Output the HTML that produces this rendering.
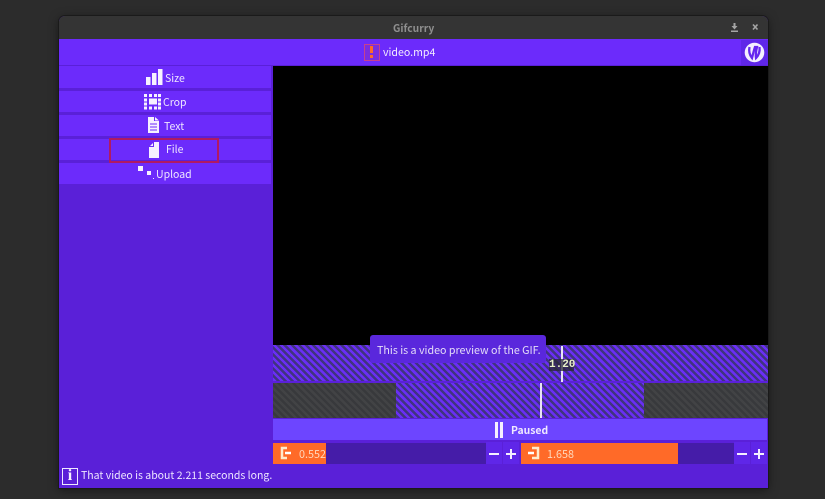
<!DOCTYPE html>
<html><head><meta charset="utf-8"><style>
html,body{margin:0;padding:0;width:825px;height:499px;overflow:hidden;background:#2c2c2c;font-family:"Noto Sans CJK JP","Liberation Sans",sans-serif}
.a{position:absolute}
svg{overflow:visible}
.btn{position:absolute;left:59px;width:212px;background:#6c2bfb}
.t{position:absolute;white-space:nowrap;line-height:14px}
.hatch{background:repeating-linear-gradient(45deg,#6a2ef6 0 2.5px,#40347f 2.5px 5px)}
.gray{background:repeating-linear-gradient(45deg,#424345 0 2.5px,#38393c 2.5px 5px)}
.sb{position:absolute;background:#5f26e8}
</style></head><body>
<div class="a" style="left:59px;top:16px;width:709px;height:472px;background:#5a20d8;border-radius:6px 6px 0 0;box-shadow:0 0 0 1px #1a1a1a,0 2px 10px rgba(0,0,0,.5);overflow:hidden"></div>
<div class="a" style="left:59px;top:16px;width:709px;height:23px;background:#343434;border-radius:6px 6px 0 0"></div>
<div class="t" style="left:393px;top:21px;font-size:10.300px;font-weight:700;color:#8f8f8f">Gifcurry</div>
<svg class="a" style="left:730px;top:22px" width="30" height="12"><path d="M3.500 1h2v3h2L4.500 7.500 1.500 4h2zM1 8.500h7v1.500H1z" fill="#a5a5a5"/><path d="M23 2.500l4.500 5M27.500 2.500l-4.500 5" stroke="#a5a5a5" stroke-width="1.600"/></svg>

<div class="a" style="left:59px;top:39px;width:709px;height:26px;background:#6c2bfb"></div>
<div class="a" style="left:364px;top:44px;width:14px;height:15px;border:1px solid #c8408c;background:#7a2de0"></div>
<div class="a" style="left:370px;top:46px;width:3px;height:7px;background:#ff6a28"></div>
<div class="a" style="left:370px;top:55px;width:3px;height:3px;background:#ff6a28"></div>
<div class="t" style="left:383px;top:46px;font-size:10.600px;color:#f3ecff">video.mp4</div>
<div class="a" style="left:741px;top:40px;width:27px;height:25px;background:#5f26e8"></div>
<svg class="a" style="left:744px;top:42px" width="21" height="21" viewBox="0 0 21 21"><circle cx="10.500" cy="10.500" r="9.800" fill="#f4efff"/><path d="M5.500 5c-1 5 0 8 2.500 11 1-4 2-8 3-11 1 0 1.500 0 2 0 -1 4-1.500 8-1 11 3-3 4-7 3.500-11" stroke="#6526ef" stroke-width="2.300" fill="none"/></svg>

<div class="btn" style="top:66px;height:22px"></div>
<div class="btn" style="top:91px;height:21px"></div>
<div class="btn" style="top:115px;height:21px"></div>
<div class="btn" style="top:139px;height:21px"></div>
<div class="btn" style="top:163px;height:21px"></div>

<svg class="a" style="left:140px;top:66px" width="40" height="120" fill="#f6f1ff">
<path d="M6 11h4.500v8H6zM12 7h4.500v12H12zM18 3h4.500v16H18z"/>
<path d="M4 28h3v3H4zM9 28h3v3H9zM14 28h3v3h-3zM18 28h3v3h-3zM4 32.500h3v3H4zM9 32.500h8v6H9zM18 32.500h3v3h-3zM4 36.500h3v3H4zM18 36.500h3v3h-3zM4 40.500h3v3H4zM9 40.500h3v3H9zM14 40.500h3v3h-3zM18 40.500h3v3h-3z"/>
<path d="M8 51h6v4h5v12H8zM15 51l4 3.500h-4z"/>
<path d="M10 57.500h7v1h-7zM10 60.500h7v1h-7zM10 63.500h7v1h-7z" fill="#6c2bfb"/>
<path d="M14 76h5v16H9V81h5zM10 80l3-3v3z"/>
<path d="M-2 100h5v5h-5zM7 105h4v4H7zM13 112h1v1h-1z"/>
</svg>
<div class="t" style="left:165px;top:72px;font-size:10.500px;color:#eee6ff">Size</div>
<div class="t" style="left:163px;top:96px;font-size:10.500px;color:#eee6ff">Crop</div>
<div class="t" style="left:164px;top:120px;font-size:10.500px;color:#eee6ff">Text</div>
<div class="t" style="left:166px;top:143px;font-size:10.500px;color:#eee6ff">File</div>
<div class="t" style="left:156px;top:168px;font-size:10.500px;color:#eee6ff">Upload</div>
<div class="a" style="left:109px;top:138px;width:106px;height:21px;border:2px solid #b01a63"></div>

<div class="a" style="left:273px;top:66px;width:495px;height:279px;background:#000"></div>
<div class="a hatch" style="left:273px;top:345px;width:495px;height:36px"></div>
<div class="a hatch" style="left:273px;top:383px;width:495px;height:35px"></div>
<div class="a gray" style="left:273px;top:383px;width:123px;height:35px"></div>
<div class="a gray" style="left:644px;top:383px;width:124px;height:35px"></div>
<div class="a" style="left:540px;top:383px;width:2px;height:35px;background:#e8e2f5"></div>
<div class="a" style="left:561px;top:346px;width:2px;height:36px;background:#e8e2f5"></div>
<div class="a" style="left:549px;top:359px;width:25px;height:12px;background:rgba(40,40,50,.75)"></div>
<div class="t" style="left:549px;top:358px;font-family:'Liberation Mono',monospace;font-size:11px;font-weight:bold;color:#e8f0c8">1.20</div>
<div class="a" style="left:370px;top:335px;width:176px;height:28px;background:#5a27dc;border-radius:3px"></div>
<div class="t" style="left:377px;top:344px;font-size:10.700px;color:#e4dcf8">This is a video preview of the GIF.</div>

<div class="a" style="left:273px;top:419px;width:494px;height:21px;background:#6d45ff"></div>
<div class="a" style="left:495px;top:422px;width:3px;height:16px;background:#f6f1ff"></div>
<div class="a" style="left:500px;top:422px;width:3px;height:16px;background:#f6f1ff"></div>
<div class="t" style="left:511px;top:423px;font-size:10.400px;font-weight:bold;color:#efe9ff">Paused</div>

<div class="a" style="left:273px;top:443px;width:213px;height:21px;background:#451ca8"></div>
<div class="a" style="left:273px;top:443px;width:53px;height:21px;background:#ff6a28"></div>
<svg class="a" style="left:279px;top:446px" width="16" height="14" fill="none" stroke="#ffeacc" stroke-width="2.500"><path d="M8 2H3v10h5"/><path d="M6 7h6" stroke="#fff"/></svg>
<div class="t" style="left:299px;top:447px;font-size:10.800px;color:#ffd9bd">0.552</div>
<div class="sb" style="left:486px;top:442px;width:16px;height:22px"></div>
<div class="sb" style="left:503px;top:442px;width:16px;height:22px"></div>
<div class="a" style="left:489px;top:453px;width:10px;height:2px;background:#f4efff"></div>
<div class="a" style="left:506px;top:453px;width:10px;height:2px;background:#f4efff"></div>
<div class="a" style="left:510px;top:449px;width:2px;height:10px;background:#f4efff"></div>

<div class="a" style="left:521px;top:443px;width:213px;height:21px;background:#451ca8"></div>
<div class="a" style="left:521px;top:443px;width:157px;height:21px;background:#ff6a28"></div>
<svg class="a" style="left:527px;top:446px" width="16" height="14" fill="none" stroke="#ffeacc" stroke-width="2.500"><path d="M5 2h6v10H5"/><path d="M1 7h6" stroke="#fff"/></svg>
<div class="t" style="left:547px;top:447px;font-size:10.800px;color:#ffd9bd">1.658</div>
<div class="sb" style="left:734px;top:442px;width:16px;height:22px"></div>
<div class="sb" style="left:751px;top:442px;width:16px;height:22px"></div>
<div class="a" style="left:737px;top:453px;width:10px;height:2px;background:#f4efff"></div>
<div class="a" style="left:754px;top:453px;width:10px;height:2px;background:#f4efff"></div>
<div class="a" style="left:758px;top:449px;width:2px;height:10px;background:#f4efff"></div>

<div class="a" style="left:62px;top:468px;width:14px;height:15px;border:1px solid #efe9ff"></div>
<div class="t" style="left:65px;top:469px;font-family:'Liberation Serif',serif;font-size:16px;font-weight:bold;color:#f6f1ff;width:10px;text-align:center">i</div>
<div class="t" style="left:81px;top:469px;font-size:10.500px;color:#eee6ff">That video is about 2.211 seconds long.</div>
</body></html>
